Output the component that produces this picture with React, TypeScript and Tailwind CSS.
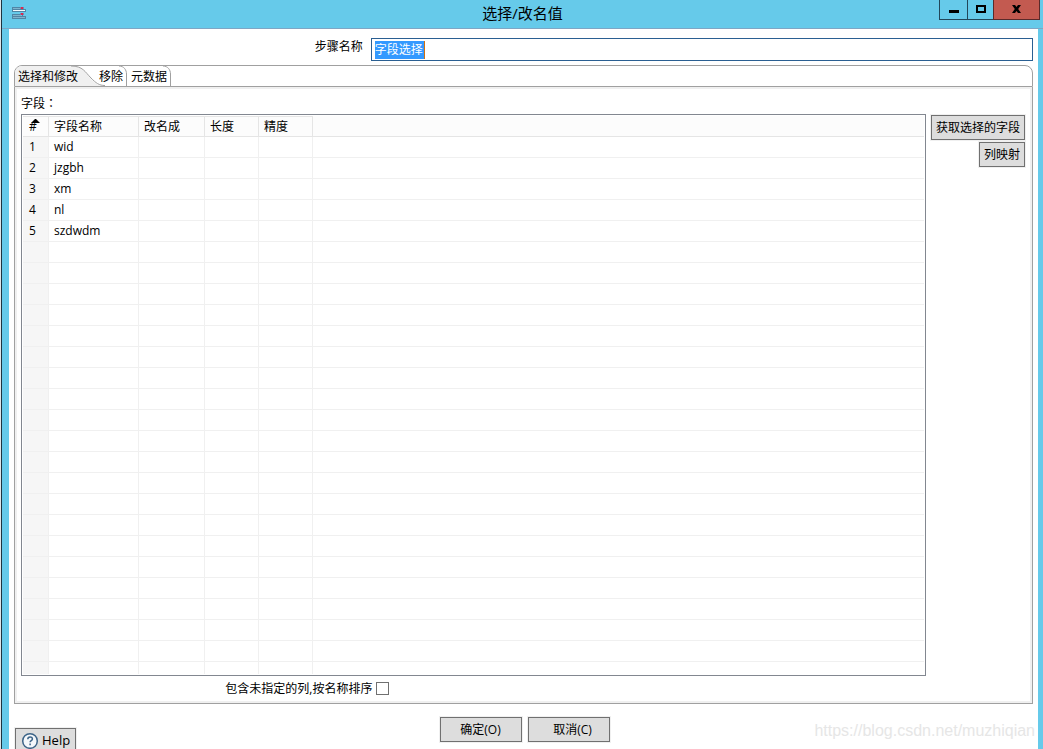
import React, { useState } from 'react';

const columns = ['字段名称', '改名成', '长度', '精度'];
const fields = ['wid', 'jzgbh', 'xm', 'nl', 'szdwdm'];
const TOTAL_ROWS = 26;

const buttonStyle = 'h-[25px] border border-[#707070] bg-[#dddddd] outline-1 outline-[#f0f0f0] whitespace-nowrap';

const StepIcon = () => (
  <svg width="14" height="14" viewBox="0 0 14 14" fill="none" shapeRendering="crispEdges" aria-hidden="true">
    <path d="M.5 1.500h10v2H.500zM.5 8.500h10v2H.500zM.5 10.500h13v2H.500zM.5 3.500h13v2H.500z" stroke="#4f86a6" />
    <path d="M1 4h12v1H1z" fill="#f4fafd" />
    <path d="M1 2h8v1H1zM1 9h8v1H1zM1 11h12v1H1z" fill="#7fb4cd" />
    <path d="M8 1h4v2H8zM8 7h4v2H8z" fill="#7a86a8" />
    <path d="M9 1h2v2H9zM9 7h2v2H9z" fill="#e0264f" />
  </svg>
);

const TitleBar = () => (
  <header className="grid h-[29px] shrink-0 grid-cols-[1fr_auto_1fr] items-start border-b border-[#7fa6c4]">
    <div className="pt-[6px] pl-[10px]">
      <StepIcon />
    </div>
    <h1 className="pt-[3px] text-[15px] leading-5">选择/改名值</h1>
    <div className="flex h-5 justify-end pr-[3px]">
      <button aria-label="最小化" className="flex w-[29px] justify-center border border-t-0 border-[#22475a] pt-[10px]">
        <span className="h-[3px] w-[10px] bg-black" />
      </button>
      <button aria-label="最大化" className="flex w-[25px] justify-center border-b border-[#22475a] pt-[5px]">
        <span className="h-2 w-[10px] border-2 border-black" />
      </button>
      <button aria-label="关闭" className="flex w-[47px] justify-center border border-t-0 border-[#5a2a2a] bg-[#c35a50] pt-[5px]">
        <svg width="9" height="8" viewBox="0 0 9 8" aria-hidden="true">
          <path d="M0 0h3l1.500 2L6 0h3L6.200 4 9 8H6L4.500 6 3 8H0l2.800-4z" />
        </svg>
      </button>
    </div>
  </header>
);

const Tabs = () => (
  <div role="tablist" className="relative flex h-[22px] overflow-hidden rounded-t-lg border border-[#a0a0a0] bg-white leading-5">
    <svg className="absolute top-0 left-0" width="160" height="20" viewBox="0 0 160 20" fill="none" aria-hidden="true">
      <path d="M0 20V0h56c12 0 14 6 20 13 5 5 8 7 14 7z" fill="#f0f0f0" />
      <path d="M56 0c12 0 14 6 20 12 5 5 8 7.500 14 7.500" stroke="#a0a0a0" />
      <path d="M104 0c5 0 7.500 4 7.500 8v12M148 0c5 0 7.500 4 7.500 8v12" stroke="#a0a0a0" />
    </svg>
    <button role="tab" aria-selected="true" className="relative w-[81px] pt-px pl-[3px] text-left">选择和修改</button>
    <button role="tab" aria-selected="false" className="relative w-8 pt-px pl-[3px] text-left">移除</button>
    <button role="tab" aria-selected="false" className="relative w-11 pt-px pl-[3px] text-left">元数据</button>
  </div>
);

const FieldTable = () => (
  <div className="min-h-0 flex-1 basis-0 overflow-hidden border border-[#828790] p-px">
    <div className="h-full overflow-hidden">
      <table className="w-full table-fixed border-separate border-spacing-0 text-left">
        <colgroup>
          <col className="w-[26px]" />
          <col className="w-[90px]" />
          <col className="w-[66px]" />
          <col className="w-[54px]" />
          <col className="w-[54px]" />
          <col />
        </colgroup>
        <thead className="leading-[19px]">
          <tr>
            <th className="relative border-t border-r border-b border-[#e5e5e5] bg-[#fcfcfc] p-0 pl-[6px] font-normal">
              #
              <svg className="absolute top-[2px] left-[8px]" width="9" height="5" viewBox="0 0 9 5" aria-hidden="true">
                <path d="M4 0h1l4 4H0z" />
              </svg>
            </th>
            {columns.map((column) => (
              <th key={column} className="border-t border-r border-b border-[#e5e5e5] bg-[#fcfcfc] p-0 pl-[5px] font-normal">
                {column}
              </th>
            ))}
            <th className="border-b border-[#e5e5e5] bg-[#fcfcfc] p-0" />
          </tr>
        </thead>
        <tbody className="leading-5">
          {Array.from({ length: TOTAL_ROWS }, (_, i) => (
            <tr key={i}>
              <td className="h-[21px] border-r border-b border-[#f0f0f0] bg-[#f6f6f6] p-0 pl-[6px]">
                {i < fields.length ? i + 1 : ''}
              </td>
              <td className="h-[21px] border-r border-b border-[#f0f0f0] p-0 pl-[5px]">{fields[i]}</td>
              <td className="border-r border-b border-[#f0f0f0] p-0" />
              <td className="border-r border-b border-[#f0f0f0] p-0" />
              <td className="border-r border-b border-[#f0f0f0] p-0" />
              <td className="border-b border-[#f0f0f0] p-0" />
            </tr>
          ))}
        </tbody>
      </table>
    </div>
  </div>
);

const App = () => {
  const [stepName, setStepName] = useState('字段选择');
  const [includeRest, setIncludeRest] = useState(false);

  return (
    <div className="flex h-screen overflow-hidden bg-[#66caea] font-['Open_Sans','Noto_Sans_CJK_SC',sans-serif] text-[12px] text-black">
      <div className="w-[2px] shrink-0 border-r border-[#1d3440] bg-[#dfe6ea]" />
      <div className="flex min-w-0 flex-1 flex-col">
        <TitleBar />
        <main className="mr-[5px] ml-[7px] flex min-h-0 flex-1 flex-col bg-white pt-[9px] pr-[5px] pl-[5px]">
          <div className="flex h-[23px] shrink-0">
            <label htmlFor="step-name" className="w-[35%] pr-2 text-right leading-[18px]">步骤名称</label>
            <div className="flex min-w-0 flex-1 items-center border border-[#2a5f92] pl-[3px]">
              <input
                id="step-name"
                value={stepName}
                onChange={(e) => setStepName(e.target.value)}
                className="h-[18px] w-[50px] border-r border-[#d07010] bg-[#3399ff] text-white outline-none"
              />
            </div>
          </div>

          <div className="mt-1 flex min-h-0 flex-1 flex-col">
            <Tabs />
            <section className="flex min-h-0 flex-1 flex-col border border-t-0 border-[#a0a0a0]">
              <div className="flex min-h-0 flex-1 flex-col border-2 border-[#f0f0f0] pr-[5px] pl-1">
                <p className="h-[25px] shrink-0 pt-1 font-['Noto_Sans_CJK_TC',sans-serif] leading-5">字段：</p>
                <div className="flex min-h-0 flex-1 gap-[5px]">
                  <FieldTable />
                  <div className="flex flex-col items-end gap-[2px] pt-px">
                    <button className={`${buttonStyle} px-1`}>获取选择的字段</button>
                    <button className={`${buttonStyle} px-1`}>列映射</button>
                  </div>
                </div>
                <div className="flex h-[25px] shrink-0 items-center">
                  <label htmlFor="include-rest" className="w-[35%] text-right">包含未指定的列,按名称排序</label>
                  <input
                    id="include-rest"
                    type="checkbox"
                    checked={includeRest}
                    onChange={(e) => setIncludeRest(e.target.checked)}
                    className="ml-1 size-[13px] appearance-none border border-[#707070] bg-white checked:bg-[#3399ff]"
                  />
                </div>
              </div>
            </section>
          </div>

          <footer className="grid h-[45px] shrink-0 grid-cols-[1fr_auto_1fr] pt-[13px]">
            <div className="flex items-start pt-[11px] pl-px">
              <button className={`${buttonStyle} flex shrink-0 items-center gap-[3px] px-[5px] text-[13px]`}>
                <svg width="18" height="18" viewBox="0 0 18 18" fill="none" stroke="#3d6488" aria-hidden="true">
                  <circle cx="9" cy="9" r="7.300" strokeWidth="1.500" fill="#f4f7fa" />
                  <path d="M6.800 7.200c0-3 4.600-3 4.600-.2 0 1.600-2.300 1.600-2.300 3.300M9.100 11.600v1.600" strokeWidth="1.500" />
                </svg>
                Help
              </button>
            </div>
            <div className="flex gap-[6px] pl-[2px]">
              <button className={`${buttonStyle} w-[82px]`}>确定(O)</button>
              <button className={`${buttonStyle} w-[82px] pl-2`}>取消(C)</button>
            </div>
            <div className="-mr-[2px] pt-1 text-right font-['Liberation_Sans',sans-serif] text-[16px] leading-5 whitespace-nowrap text-[#e6e6e6]">
              https://blog.csdn.net/muzhiqian
            </div>
          </footer>
        </main>
      </div>
    </div>
  );
};

export default App;
